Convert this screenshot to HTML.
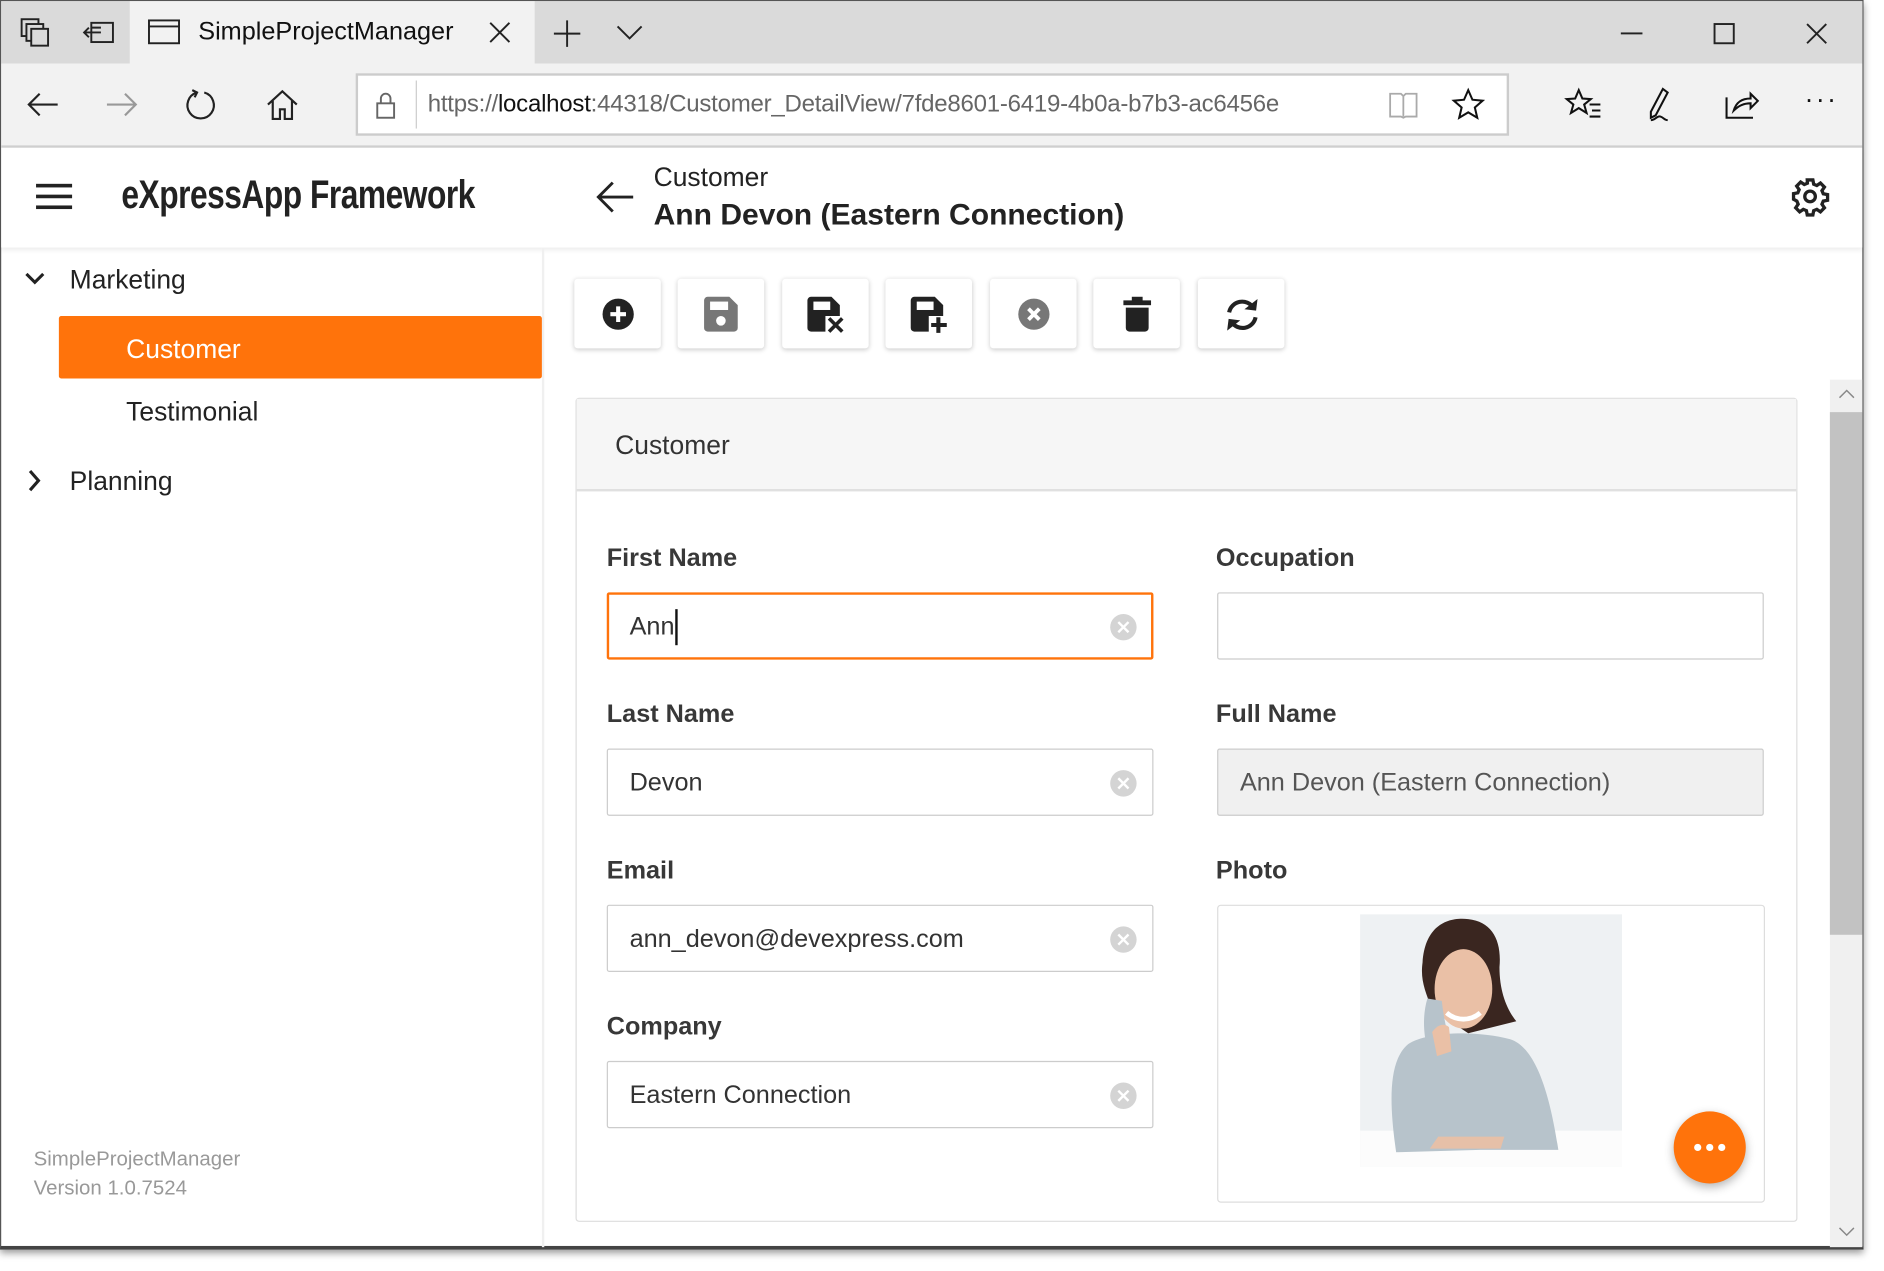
<!DOCTYPE html>
<html><head><meta charset="utf-8"><style>
html,body{margin:0;padding:0;width:1884px;height:1271px;overflow:hidden;background:#fff}
#w{position:absolute;left:0;top:0;width:1560px;height:1052px;transform:scale(1.2015);transform-origin:0 0;font-family:"Liberation Sans",sans-serif;color:#333}
.a{position:absolute}
svg.i{position:absolute;overflow:visible}
.lbl{position:absolute;font-size:21px;font-weight:bold;color:#383838}
.inp{position:absolute;width:455px;height:56px;border:1px solid #ccc;border-radius:2px;box-sizing:border-box;background:#fff;font-size:21px;color:#333;line-height:56px;padding-left:18px}
.clr{position:absolute;right:13px;top:17px;width:22px;height:22px;border-radius:50%;background:#d4d4d4}
.clr:before,.clr:after{content:"";position:absolute;left:10px;top:5px;width:2px;height:12px;background:#fff;transform:rotate(45deg)}
.clr:after{transform:rotate(-45deg)}
.btn{position:absolute;top:232px;width:72px;height:58px;background:#fff;border-radius:3px;box-shadow:0 1px 4px rgba(0,0,0,.2)}
</style></head><body><div id="w">
<div class="a" style="left:0;top:0;width:1551px;height:1040px;border:1px solid #555;border-bottom:3px solid #444;box-sizing:border-box;box-shadow:0 3px 6px rgba(0,0,0,.4)"></div>
<div class="a" style="left:1px;top:1px;width:1549px;height:52px;background:#dadada"></div>
<div class="a" style="left:108px;top:1px;width:337px;height:52px;background:#f2f2f2"></div>
<svg class="i" style="left:17px;top:15px" width="24" height="24" fill="none" stroke="#222" stroke-width="1.6"><rect x="1" y="1" width="14" height="14"/><rect x="5" y="5" width="14" height="14" fill="#dadada"/><rect x="9" y="9" width="14" height="14" fill="#dadada"/></svg>
<svg class="i" style="left:68px;top:17px" width="28" height="22" fill="none" stroke="#222" stroke-width="1.6"><rect x="8" y="2" width="18" height="16"/><path d="M2 10h14M6 6l-4 4 4 4M8 6h8"/></svg>
<svg class="i" style="left:123px;top:16px" width="28" height="22" fill="none" stroke="#222" stroke-width="1.6"><rect x="1" y="1" width="25" height="19"/><path d="M1 6h25"/></svg>
<div class="a" style="left:165px;top:15px;font-size:21px;color:#111">SimpleProjectManager</div>
<svg class="i" style="left:407px;top:18px" width="18" height="18" stroke="#222" stroke-width="1.6"><path d="M1 1l16 16M17 1L1 17"/></svg>
<svg class="i" style="left:460px;top:16px" width="24" height="24" stroke="#222" stroke-width="1.6"><path d="M12 1v22M1 12h22"/></svg>
<svg class="i" style="left:513px;top:21px" width="22" height="12" fill="none" stroke="#222" stroke-width="1.6"><path d="M1 1l10 10L21 1"/></svg>
<svg class="i" style="left:1349px;top:27px" width="18" height="2"><rect width="18" height="1.6" fill="#222"/></svg>
<svg class="i" style="left:1426px;top:19px" width="18" height="18" fill="none" stroke="#222" stroke-width="1.6"><rect x="1" y="1" width="16" height="16"/></svg>
<svg class="i" style="left:1503px;top:19px" width="18" height="18" stroke="#222" stroke-width="1.6"><path d="M1 1l16 16M17 1L1 17"/></svg>
<div class="a" style="left:1px;top:53px;width:1549px;height:68px;background:#f2f2f2;border-bottom:2px solid #d0d0d0"></div>
<svg class="i" style="left:22px;top:76px" width="28" height="22" fill="none" stroke="#222" stroke-width="1.8"><path d="M26 11H2M11 2L2 11l9 9"/></svg>
<svg class="i" style="left:87px;top:76px" width="28" height="22" fill="none" stroke="#999" stroke-width="1.8"><path d="M2 11h24M17 2l9 9-9 9"/></svg>
<svg class="i" style="left:155px;top:74px" width="26" height="28" fill="none" stroke="#222" stroke-width="1.8"><path d="M9 3A11 11 0 1 0 15 3"/><path d="M5 1l4 2-2 4"/></svg>
<svg class="i" style="left:221px;top:74px" width="28" height="28" fill="none" stroke="#222" stroke-width="1.8"><path d="M2 13L14 2l12 11M6 10v15h6v-8h4v8h6V10"/></svg>
<div class="a" style="left:296px;top:61px;width:960px;height:52px;background:#fff;border:2px solid #ccc;box-sizing:border-box"></div>
<svg class="i" style="left:312px;top:76px" width="18" height="24" fill="none" stroke="#666" stroke-width="1.6"><rect x="2" y="10" width="14" height="12"/><path d="M5 10V6a4 4 0 0 1 8 0v4"/></svg>
<div class="a" style="left:346px;top:67px;width:1px;height:40px;background:#ccc"></div>
<div class="a" style="left:356px;top:76px;font-size:20px;color:#666;white-space:nowrap;letter-spacing:-.2px">https://<span style="color:#111">localhost</span>:44318/Customer_DetailView/7fde8601-6419-4b0a-b7b3-ac6456e</div>
<div class="a" style="left:1138px;top:65px;width:16px;height:44px;background:#fff"></div>
<svg class="i" style="left:1155px;top:76px" width="26" height="24" fill="none" stroke="#aaa" stroke-width="1.5"><path d="M2 2h9l2 2 2-2h9v19h-9l-2 1-2-1H2zM13 4v17"/></svg>
<svg class="i" style="left:1208px;top:73px" width="28" height="28" fill="none" stroke="#111" stroke-width="1.7"><path d="M14 2l3.5 8 8.5.8-6.5 5.7 2 8.5L14 20.5 6.5 25l2-8.5L2 10.8l8.5-.8z"/></svg>
<svg class="i" style="left:1303px;top:73px" width="30" height="28" fill="none" stroke="#111" stroke-width="1.7"><path d="M11 2l3 7 7 .5-5.5 4.5 2 7L11 17l-6.5 4 2-7L1 9.5 8 9zM20 14h9M22 19h7M20 24h9"/></svg>
<svg class="i" style="left:1370px;top:72px" width="30" height="32" fill="none" stroke="#111" stroke-width="1.7"><path d="M14 2l4 3-10 19-4 2 0-5zM4 28c4 0 5-4 8-3s3 3 6 3"/></svg>
<svg class="i" style="left:1435px;top:73px" width="30" height="28" fill="none" stroke="#111" stroke-width="1.7"><path d="M2 8v17h22"/><path d="M8 19c2-7 7-10 14-10V5l6 6-6 6v-4c-6 0-10 2-14 6z"/></svg>
<div class="a" style="left:1502px;top:70px;font-size:22px;color:#111;letter-spacing:2px">···</div>
<div class="a" style="left:1px;top:123px;width:1549px;height:83px;background:#fff;box-shadow:0 2px 4px rgba(0,0,0,.08)"></div>
<svg class="i" style="left:30px;top:153px" width="30" height="22" fill="#222"><rect y="0" width="30" height="3"/><rect y="9" width="30" height="3"/><rect y="18" width="30" height="3"/></svg>
<div class="a" style="left:101px;top:143px;font-size:33px;font-weight:bold;color:#222;transform:scaleX(.8);transform-origin:0 0;white-space:nowrap;letter-spacing:-.5px">eXpressApp Framework</div>
<svg class="i" style="left:496px;top:150px" width="32" height="28" fill="none" stroke="#222" stroke-width="2.4"><path d="M31 14H3M14 2L2 14l12 12"/></svg>
<div class="a" style="left:544px;top:135px;font-size:22px;color:#222">Customer</div>
<div class="a" style="left:544px;top:165px;font-size:25px;font-weight:bold;color:#222;white-space:nowrap">Ann Devon (Eastern Connection)</div>
<svg class="i" style="left:1490px;top:147px" width="33" height="33" viewBox="0 0 24 24" fill="none" stroke="#222" stroke-width="2"><circle cx="12" cy="12" r="3.2"/><path d="M10.3 2h3.4l.5 2.6 1.9.8 2.2-1.5 2.4 2.4-1.5 2.2.8 1.9 2.6.5v3.4l-2.6.5-.8 1.9 1.5 2.2-2.4 2.4-2.2-1.5-1.9.8-.5 2.6h-3.4l-.5-2.6-1.9-.8-2.2 1.5-2.4-2.4 1.5-2.2-.8-1.9L2 13.7v-3.4l2.6-.5.8-1.9-1.5-2.2 2.4-2.4 2.2 1.5 1.9-.8z"/></svg>
<div class="a" style="left:451px;top:206px;width:2px;height:832px;background:#f0f0f0"></div>
<svg class="i" style="left:20px;top:226px" width="18" height="12" fill="none" stroke="#222" stroke-width="2.6"><path d="M2 2l7 7 7-7"/></svg>
<div class="a" style="left:58px;top:220px;font-size:22px;color:#222">Marketing</div>
<div class="a" style="left:49px;top:263px;width:402px;height:52px;background:#ff730b;border-radius:2px"></div>
<div class="a" style="left:105px;top:278px;font-size:22px;color:#fff">Customer</div>
<div class="a" style="left:105px;top:330px;font-size:22px;color:#222">Testimonial</div>
<svg class="i" style="left:23px;top:390px" width="12" height="20" fill="none" stroke="#222" stroke-width="2.6"><path d="M2 2l7 8-7 8"/></svg>
<div class="a" style="left:58px;top:388px;font-size:22px;color:#222">Planning</div>
<div class="a" style="left:28px;top:953px;font-size:17px;color:#999;line-height:24px">SimpleProjectManager<br>Version 1.0.7524</div>
<div class="btn" style="left:478px"><svg class="i" style="left:23px;top:16px" width="27" height="27"><circle cx="13.5" cy="13.5" r="13" fill="#222"/><path d="M13.5 7v13M7 13.5h13" stroke="#fff" stroke-width="3.4"/></svg></div>
<div class="btn" style="left:564px"><svg class="i" style="left:22px;top:15px" width="28" height="29"><path d="M0 3a3 3 0 0 1 3-3h18l7 7v19a3 3 0 0 1-3 3H3a3 3 0 0 1-3-3z" fill="#777"/><rect x="5" y="4" width="15" height="7" fill="#fff"/><circle cx="14" cy="20" r="4" fill="#fff"/></svg></div>
<div class="btn" style="left:651px"><svg class="i" style="left:21px;top:15px" width="32" height="30"><path d="M0 3a3 3 0 0 1 3-3h17l7 7v9H15v13H3a3 3 0 0 1-3-3z" fill="#222"/><rect x="5" y="4" width="14" height="7" fill="#fff"/><path d="M18 18l11 11M29 18L18 29" stroke="#222" stroke-width="3"/></svg></div>
<div class="btn" style="left:737px"><svg class="i" style="left:21px;top:15px" width="32" height="30"><path d="M0 3a3 3 0 0 1 3-3h17l7 7v9H15v13H3a3 3 0 0 1-3-3z" fill="#222"/><rect x="5" y="4" width="14" height="7" fill="#fff"/><path d="M23 17v13M17 23.5h13" stroke="#222" stroke-width="3.4"/></svg></div>
<div class="btn" style="left:824px"><svg class="i" style="left:23px;top:16px" width="27" height="27"><circle cx="13.5" cy="13.5" r="13" fill="#777"/><path d="M9 9l9 9M18 9l-9 9" stroke="#fff" stroke-width="3.2"/></svg></div>
<div class="btn" style="left:910px"><svg class="i" style="left:25px;top:15px" width="23" height="29"><rect x="0" y="3" width="23" height="4" fill="#222"/><rect x="7" y="0" width="9" height="4" fill="#222"/><path d="M2 9h19v17a3 3 0 0 1-3 3H5a3 3 0 0 1-3-3z" fill="#222"/></svg></div>
<div class="btn" style="left:997px"><svg class="i" style="left:21px;top:15px" width="32" height="30" fill="none" stroke="#222" stroke-width="3.4"><path d="M5 13a11 11 0 0 1 20-4M27 17a11 11 0 0 1-20 4"/><path d="M28 3l-1 8-8-1z" fill="#222" stroke-width="1"/><path d="M4 27l1-8 8 1z" fill="#222" stroke-width="1"/></svg></div>
<div class="a" style="left:1523px;top:316px;width:27px;height:722px;background:#f0f0f0"></div>
<div class="a" style="left:1523px;top:343px;width:27px;height:435px;background:#c2c2c2"></div>
<svg class="i" style="left:1530px;top:324px" width="14" height="8" fill="none" stroke="#888" stroke-width="1.2"><path d="M1 7l6-6 6 6"/></svg>
<svg class="i" style="left:1530px;top:1021px" width="14" height="8" fill="none" stroke="#888" stroke-width="1.2"><path d="M1 1l6 6 6-6"/></svg>
<div class="a" style="left:479px;top:331px;width:1017px;height:686px;border:1px solid #ddd;box-sizing:border-box;border-radius:3px;background:#fff"></div>
<div class="a" style="left:480px;top:332px;width:1015px;height:75px;background:#f6f6f6;border-bottom:2px solid #e0e0e0"></div>
<div class="a" style="left:512px;top:358px;font-size:22px;color:#333">Customer</div>
<div class="lbl" style="left:505px;top:453px">First Name</div>
<div class="inp" style="left:505px;top:493px;border:2px solid #ff730b;padding-left:17px;line-height:54px">Ann<span style="display:inline-block;width:2px;height:30px;background:#111;vertical-align:middle;margin-left:1px"></span><div class="clr" style="right:12px;top:16px"></div></div>
<div class="lbl" style="left:505px;top:583px">Last Name</div>
<div class="inp" style="left:505px;top:623px">Devon<div class="clr"></div></div>
<div class="lbl" style="left:505px;top:713px">Email</div>
<div class="inp" style="left:505px;top:753px">ann_devon@devexpress.com<div class="clr"></div></div>
<div class="lbl" style="left:505px;top:843px">Company</div>
<div class="inp" style="left:505px;top:883px">Eastern Connection<div class="clr"></div></div>
<div class="lbl" style="left:1012px;top:453px">Occupation</div>
<div class="inp" style="left:1013px;top:493px"></div>
<div class="lbl" style="left:1012px;top:583px">Full Name</div>
<div class="inp" style="left:1013px;top:623px;background:#f0f0f0;color:#555">Ann Devon (Eastern Connection)</div>
<div class="lbl" style="left:1012px;top:713px">Photo</div>
<div class="a" style="left:1013px;top:753px;width:456px;height:248px;border:1px solid #ddd;box-sizing:border-box;border-radius:3px"></div>
<svg class="i" style="left:1132px;top:761px" width="218" height="210" viewBox="0 0 218 210">
<rect width="218" height="210" fill="#eef1f3"/>
<rect x="0" y="180" width="218" height="30" fill="#fcfcfc"/>
<path d="M52 40c2-30 20-38 38-36 20 2 28 18 26 40 0 20 6 35 14 45l-40 10-30-20c-6-15-10-25-8-39z" fill="#3a2620"/>
<ellipse cx="86" cy="62" rx="24" ry="33" fill="#eac0a6"/>
<path d="M72 82c8 7 20 7 28 0" stroke="#fff" stroke-width="4" fill="none"/>
<path d="M40 108c15-10 55-12 85-4 25 8 35 60 40 92H100l-70 2c-5-35-8-75 10-90z" fill="#b7c3cb"/>
<path d="M56 70c-6 20 -2 45 8 60l18 2c-6-20-12-40-14-60z" fill="#b7c3cb"/>
<path d="M60 98c4-6 10-8 14-4l2 20-12 4z" fill="#eac0a6"/>
<path d="M65 185h55l-3 10H58z" fill="#e6c0a8"/>
</svg>
<div class="a" style="left:1393px;top:925px;width:60px;height:60px;border-radius:50%;background:#ff730b;box-shadow:0 3px 8px rgba(0,0,0,.3)"></div>
<div class="a" style="left:1410px;top:952px;width:6px;height:6px;border-radius:50%;background:#fff;box-shadow:10px 0 #fff,20px 0 #fff"></div>
</div></body></html>
